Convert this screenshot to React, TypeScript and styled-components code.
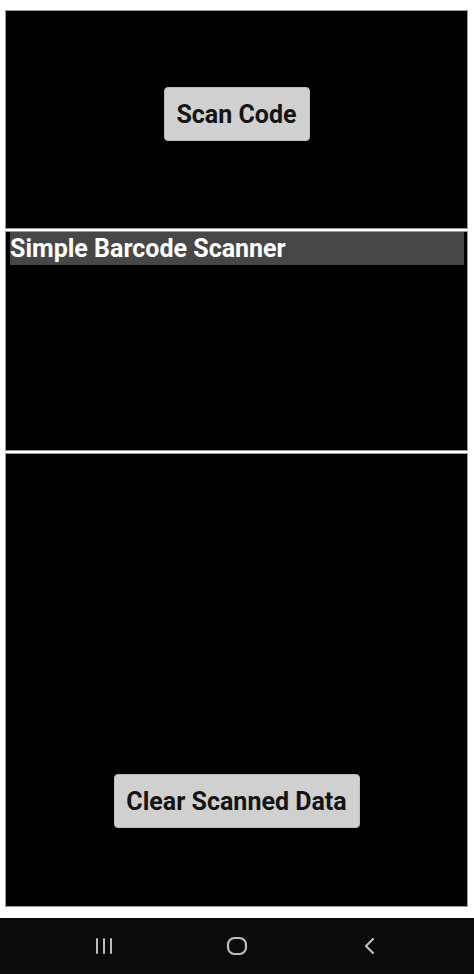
import React from "react";
import styled, { createGlobalStyle } from "styled-components";

const Global = createGlobalStyle`
  html, body { margin: 0; padding: 0; background: #ffffff; }
  body { font-family: Roboto, "Liberation Sans", Arial, sans-serif; }
  * { box-sizing: border-box; }
`;

const Screen = styled.div`
  width: 474px;
  height: 974px;
  display: flex;
  flex-direction: column;
  background: #ffffff;
  overflow: hidden;
`;

const Content = styled.div`
  flex: 1;
  display: flex;
  flex-direction: column;
  gap: 2px;
  padding: 10px 6px 11px 5px;
`;

const Panel = styled.section<{ $h: number; $align: "start" | "end" | "none" }>`
  height: ${(p) => p.$h}px;
  background: #000000;
  border: 1px solid #9a9a9a;
  display: flex;
  flex-direction: column;
  align-items: ${(p) => (p.$align === "none" ? "stretch" : "center")};
  justify-content: ${(p) => (p.$align === "end" ? "flex-end" : "flex-start")};
  padding-top: ${(p) => (p.$align === "start" ? 76 : 0)}px;
  padding-bottom: ${(p) => (p.$align === "end" ? 78 : 0)}px;
`;

const Button = styled.button<{ $w: number }>`
  width: ${(p) => p.$w}px;
  height: 54px;
  background: #d0d0d0;
  border: 1px solid #bdbdbd;
  border-radius: 4px;
  color: #141414;
  font-family: Roboto, "Liberation Sans", Arial, sans-serif;
  font-weight: 700;
  font-size: 25px;
  padding: 0;
  display: flex;
  align-items: center;
  justify-content: center;
`;

const Header = styled.div`
  margin: 0 3px 0 4px;
  height: 33px;
  background: #474747;
  color: #ffffff;
  font-weight: 700;
  font-size: 25px;
  line-height: 34px;
  white-space: nowrap;
`;

const NavBar = styled.nav`
  height: 56px;
  background: #0b0b0b;
  display: flex;
  align-items: center;
  padding: 0 37px;
`;

const NavSlot = styled.div`
  flex: 1;
  display: flex;
  justify-content: center;
  align-items: center;
`;

export default function App() {
  return (
    <Screen>
      <Global />
      <Content>
        <Panel $h={219} $align="start">
          <Button $w={146}>Scan Code</Button>
        </Panel>
        <Panel $h={220} $align="none">
          <Header>Simple Barcode Scanner</Header>
        </Panel>
        <Panel $h={454} $align="end">
          <Button $w={246}>Clear Scanned Data</Button>
        </Panel>
      </Content>
      <NavBar>
        <NavSlot>
          <svg width="20" height="18" viewBox="0 0 20 18">
            <g stroke="#bdbdbd" strokeWidth="2" strokeLinecap="round">
              <line x1="3" y1="2" x2="3" y2="16" />
              <line x1="10" y1="2" x2="10" y2="16" />
              <line x1="17" y1="2" x2="17" y2="16" />
            </g>
          </svg>
        </NavSlot>
        <NavSlot>
          <svg width="22" height="20" viewBox="0 0 22 20">
            <rect x="2" y="2" width="18" height="16" rx="6.5" fill="none" stroke="#bdbdbd" strokeWidth="2.2" />
          </svg>
        </NavSlot>
        <NavSlot>
          <svg width="14" height="20" viewBox="0 0 14 20">
            <polyline points="10,3 3,10 10,17" fill="none" stroke="#bdbdbd" strokeWidth="2.2" strokeLinecap="round" strokeLinejoin="round" />
          </svg>
        </NavSlot>
      </NavBar>
    </Screen>
  );
}
